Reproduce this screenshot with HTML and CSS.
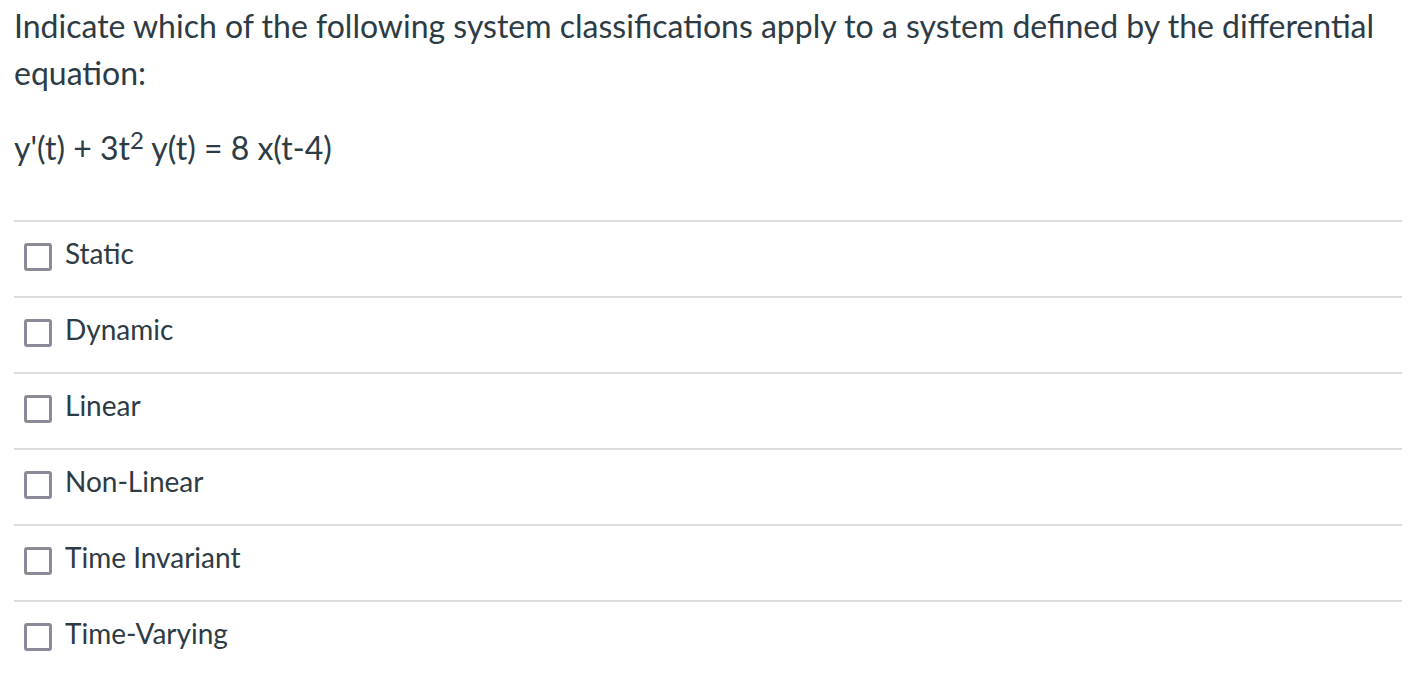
FILE: index.html
```html
<!DOCTYPE html>
<html>
<head>
<meta charset="utf-8">
<link rel="stylesheet" href="styles.css">
</head>
<body>
<div class="question">
  <p class="text">Indicate which of the following system classifications apply to a system defined by the differential equation:</p>
  <p class="text">y'(t) + 3t<sup>2</sup> y(t) = 8 x(t-4)</p>
  <div class="answers">
    <label class="answer"><span class="box"></span><span class="label">Static</span></label>
    <label class="answer"><span class="box"></span><span class="label">Dynamic</span></label>
    <label class="answer"><span class="box"></span><span class="label">Linear</span></label>
    <label class="answer"><span class="box"></span><span class="label">Non-Linear</span></label>
    <label class="answer"><span class="box"></span><span class="label">Time Invariant</span></label>
    <label class="answer"><span class="box"></span><span class="label">Time-Varying</span></label>
  </div>
</div>
</body>
</html>
```
FILE: styles.css
```css
html, body {
  margin: 0;
  padding: 0;
  background: #ffffff;
}
body {
  font-family: Lato, "Open Sans", sans-serif;
  color: #2d3b45;
}
.question {
  width: 1388px;
  padding: 2px 0 0 14px;
}
.text {
  margin: 0 0 28px 0;
  font-size: 32px;
  line-height: 47px;
}
.text sup {
  font-size: 0.75em;
  line-height: 0;
  vertical-align: 0.45em;
}
.answers {
  margin-top: 49px;
  border-top: 2px solid #dcdcdc;
  font-size: 28px;
  line-height: 42px;
}
.answer {
  display: flex;
  align-items: flex-start;
  height: 74px;
  border-bottom: 2px solid #dcdcdc;
}
.answer:last-child {
  border-bottom: none;
}
.box {
  flex: none;
  width: 22px;
  height: 22px;
  border: 3px solid #8b8a98;
  border-radius: 3px;
  margin: 21px 13px 0 10px;
}
.label {
  margin-top: 10px;
}
```
